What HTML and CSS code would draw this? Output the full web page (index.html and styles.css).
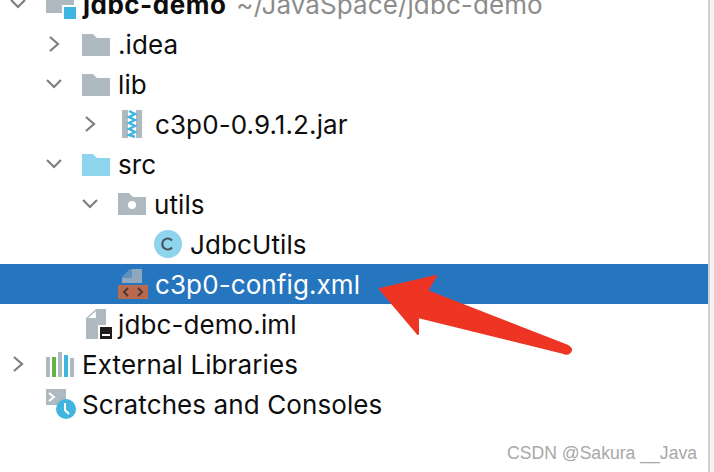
FILE: index.html
```html
<!DOCTYPE html>
<html lang="en">
  <head>
    <meta charset="UTF-8" />
    <title>Project tree</title>
    <link rel="stylesheet" href="styles.css">
  </head>
  <body>
    <div class="tree">
      <div class="row root">
        <svg class="chevron" viewBox="0 0 16 16"><path d="M1 4l7 7 7-7"/></svg>
        <svg class="icon wide" viewBox="0 0 30 30"><path fill="#afb9c0" d="M0 5h28v19H0z"/><path fill="#fff" d="M16 16h14v14H16z"/><path fill="#3fb5e0" d="M18 18h12v12H18z"/></svg>
        <span class="name bold">jdbc-demo</span>
        <span class="path">~/JavaSpace/jdbc-demo</span>
      </div>
      <div class="row level-1">
        <svg class="chevron" viewBox="0 0 16 16"><path d="M4 1l8 7-8 7"/></svg>
        <svg class="icon" viewBox="0 0 28 28"><path fill="#afb9c0" d="M0 4h11l4 4h13v18H0z"/></svg>
        <span class="name">.idea</span>
      </div>
      <div class="row level-1">
        <svg class="chevron" viewBox="0 0 16 16"><path d="M1 4l7 7 7-7"/></svg>
        <svg class="icon" viewBox="0 0 28 28"><path fill="#afb9c0" d="M0 4h11l4 4h13v18H0z"/></svg>
        <span class="name">lib</span>
      </div>
      <div class="row level-2">
        <svg class="chevron" viewBox="0 0 16 16"><path d="M4 1l8 7-8 7"/></svg>
        <svg class="icon jar" viewBox="0 0 20 28"><path fill="#afb9c0" d="M0 0h6v28H0zM14 0h6v28h-6z"/><path fill="none" stroke="#3fb5e0" stroke-width="2.4" d="M7 1l6 3-6 3 6 3-6 3 6 3-6 3 6 3-6 3 6 2"/></svg>
        <span class="name">c3p0-0.9.1.2.jar</span>
      </div>
      <div class="row level-1">
        <svg class="chevron" viewBox="0 0 16 16"><path d="M1 4l7 7 7-7"/></svg>
        <svg class="icon" viewBox="0 0 28 28"><path fill="#8dd4ec" d="M0 4h11l4 4h13v18H0z"/></svg>
        <span class="name">src</span>
      </div>
      <div class="row level-2">
        <svg class="chevron" viewBox="0 0 16 16"><path d="M1 4l7 7 7-7"/></svg>
        <svg class="icon" viewBox="0 0 28 28"><path fill="#afb9c0" fill-rule="evenodd" d="M0 3h11l4 4h13v18H0zM10 15a4 4 0 1 0 8 0 4 4 0 1 0-8 0z"/></svg>
        <span class="name">utils</span>
      </div>
      <div class="row level-3">
        <svg class="icon" viewBox="0 0 28 28"><circle cx="14" cy="14" r="14" fill="#8dd4ec"/><path fill="none" stroke="#4a5560" stroke-width="2.2" d="M18 10.5a5.5 5.5 0 1 0 0 7"/></svg>
        <span class="name">JdbcUtils</span>
      </div>
      <div class="row selected">
        <svg class="icon wide" viewBox="0 0 30 30"><path fill="#8fa8c0" d="M12 0h12v14H4v-6z"/><path fill="#2675bf" d="M12 0h2v9H4V8z" opacity=".45"/><path fill="#b8694e" d="M0 16h30v14H0z"/><path fill="none" stroke="#4a3a36" stroke-width="2" d="M10 19l-4 4 4 4M20 19l4 4-4 4"/></svg>
        <span class="name">c3p0-config.xml</span>
      </div>
      <div class="row module">
        <svg class="icon" viewBox="0 0 26 30"><path fill="#afb9c0" fill-rule="evenodd" d="M10 0h10v30H0V9zM10 9V2L2 9z"/><path fill="#fff" d="M12 16h14v14H12z"/><path fill="#1f1c1e" d="M14 18h12v12H14z"/><path fill="#fff" d="M16 25h8v2h-8z"/></svg>
        <span class="name">jdbc-demo.iml</span>
      </div>
      <div class="row">
        <svg class="chevron" viewBox="0 0 16 16"><path d="M4 1l8 7-8 7"/></svg>
        <svg class="icon libs" viewBox="0 0 28 28"><path fill="#afb9c0" d="M0 7h4v20H0zM12 2h4v25h-4z"/><path fill="#62b543" d="M6 7h4v20H6z"/><path fill="#3fb5e0" d="M18 5h4v22h-4z"/><path fill="#afb9c0" d="M24 8h4v19h-4z"/></svg>
        <span class="name">External Libraries</span>
      </div>
      <div class="row">
        <span class="chevron"></span>
        <svg class="icon wide scratch" viewBox="0 0 30 30"><path fill="#afb9c0" d="M0 0h20v16H0z"/><path fill="none" stroke="#fff" stroke-width="2" d="M3 4l5 4-5 4"/><circle cx="20" cy="20" r="10" fill="#3fb5e0"/><path fill="none" stroke="#fff" stroke-width="2" d="M19 14v7l4 4"/></svg>
        <span class="name">Scratches and Consoles</span>
      </div>
    </div>
    <div class="strip"></div>
    <svg class="arrow" viewBox="0 0 714 472"><path fill="#ee3524" stroke="#ee3524" stroke-width="2" stroke-linejoin="round" d="M380 289L436 276 427 291 568 346Q573 349 570 352 568 355 564 353L418 317V334z"/></svg>
    <div class="watermark">CSDN @Sakura __Java</div>
  </body>
</html>
```

FILE: styles.css
```css
html, body {
  height: 100%;
}

body {
  margin: 0;
  display: flex;
  background: #fff;
  overflow: hidden;
  font-family: Inter, "Liberation Sans", sans-serif;
  color: #0d0d0d;
}

.tree {
  flex: 1;
  margin-top: -16px;
}

.strip {
  width: 4px;
  background: #f3f3f3;
  border-left: 2px solid #cfcfcf;
}

.row {
  display: flex;
  align-items: center;
  height: 40px;
  padding-left: 10px;
  font-size: 26px;
  letter-spacing: 0.1px;
  white-space: nowrap;
}

.level-1 {
  padding-left: 46px;
}

.level-2 {
  padding-left: 82px;
}

.level-3 {
  padding-left: 154px;
}

.module {
  padding-left: 86px;
}

.selected {
  padding-left: 118px;
  background: #2675bf;
  color: #fff;
}

.chevron {
  width: 16px;
  height: 16px;
  margin-right: 20px;
  flex: none;
  fill: none;
  stroke: #7f7f7f;
  stroke-width: 2.2;
}

.icon {
  width: 28px;
  height: 28px;
  margin-right: 8px;
  flex: none;
}

.icon.wide {
  width: 30px;
  height: 30px;
  margin-right: 7px;
}

.icon.wide.scratch {
  margin-right: 6px;
}

.icon.libs {
  margin-right: 8px;
}

.icon.jar {
  width: 20px;
  margin-left: 4px;
  margin-right: 13px;
}

.module .icon {
  width: 26px;
  height: 30px;
  margin-right: 6px;
}

.name.bold {
  font-weight: 700;
  letter-spacing: 0.5px;
}

.path {
  margin-left: 10px;
  color: #8c8c8c;
}

.arrow {
  position: absolute;
  left: 0;
  top: 0;
  width: 714px;
  height: 472px;
}

.watermark {
  position: absolute;
  right: 17px;
  bottom: 8px;
  font-family: "Liberation Sans", sans-serif;
  font-size: 17.6px;
  color: #a8a8a8;
}
```
